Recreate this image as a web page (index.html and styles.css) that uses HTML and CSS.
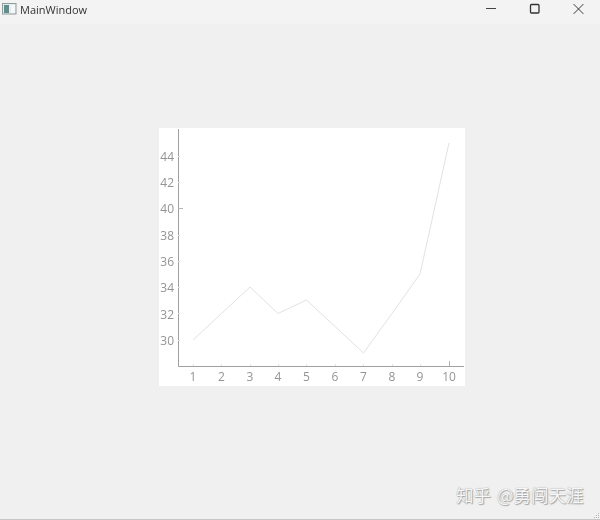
FILE: index.html
```html
<!DOCTYPE html>
<html lang="zh">
<head>
<meta charset="utf-8">
<title>MainWindow</title>
<link rel="stylesheet" href="styles.css">
</head>
<body>
<div class="window">
  <header class="titlebar">
    <div class="title-left">
      <svg class="app-icon" width="15" height="14" viewBox="0 0 15 14">
        <rect x="0.5" y="1.5" width="13.5" height="10.5" fill="#e4eeec" stroke="#8f9c9d"/>
        <rect x="2" y="3" width="5" height="8" fill="#5f8f8d"/>
        <rect x="9" y="3" width="4" height="8" fill="#f4f8f8"/>
      </svg>
      <span class="title-text">MainWindow</span>
    </div>
    <div class="controls">
      <svg class="control" width="44" height="18" viewBox="0 0 44 18"><path d="M17 8.5H27" stroke="#444" fill="none"/></svg>
      <svg class="control" width="44" height="18" viewBox="0 0 44 18"><rect x="17.5" y="4.5" width="8.5" height="8.5" rx="1" stroke="#333" stroke-width="1.3" fill="none"/></svg>
      <svg class="control" width="43" height="18" viewBox="0 0 44 18"><path d="M17 4L27 14M27 4L17 14" stroke="#333" fill="none"/></svg>
    </div>
  </header>
  <main class="content">
    <svg class="chart" width="306" height="258" viewBox="159 128 306 258">
      <rect x="159" y="128" width="306" height="258" fill="#fff"/>
      <path class="axis" d="M178.5 129V366.5H464"/>
      <path class="major" d="M178 208.5H183M449.5 366V361"/>
      <g class="minor">
        <path d="M178 340.5H180M178 313.5H180M178 287.5H180M178 261.5H180M178 235.5H180M178 182.5H180M178 156.5H180"/>
        <path d="M193.5 366V364M221.5 366V364M250.5 366V364M278.5 366V364M306.5 366V364M335.5 366V364M363.5 366V364M392.5 366V364M420.5 366V364"/>
      </g>
      <polyline class="series" points="193,340 221.5,313.5 250,287 278,313.5 306.5,300 335,326.5 363.5,353 392,313.5 420,274 449,143"/>
      <g class="ylabels">
        <text x="174" y="345">30</text>
        <text x="174" y="319">32</text>
        <text x="174" y="292">34</text>
        <text x="174" y="266">36</text>
        <text x="174" y="240">38</text>
        <text x="174" y="213">40</text>
        <text x="174" y="187">42</text>
        <text x="174" y="161">44</text>
      </g>
      <g class="xlabels">
        <text x="193" y="381">1</text>
        <text x="221.5" y="381">2</text>
        <text x="250" y="381">3</text>
        <text x="278" y="381">4</text>
        <text x="306.5" y="381">5</text>
        <text x="335" y="381">6</text>
        <text x="363.5" y="381">7</text>
        <text x="392" y="381">8</text>
        <text x="420" y="381">9</text>
        <text x="449" y="381">10</text>
      </g>
    </svg>
  </main>
  <div class="watermark">知乎 @勇闯天涯</div>
  <svg class="grip" width="8" height="8" viewBox="0 0 8 8"><path d="M6 1h1v1H6zM4 3h1v1H4zM6 3h1v1H6zM2 5h1v1H2zM4 5h1v1H4zM6 5h1v1H6z" fill="#b5b5b5"/></svg>
</div>
</body>
</html>
```
FILE: styles.css
```css
html, body {
  margin: 0;
  padding: 0;
}

.window {
  position: relative;
  display: flex;
  flex-direction: column;
  width: 600px;
  height: 520px;
  overflow: hidden;
  background: #f0f0f0;
  font-family: "Open Sans", "Noto Sans", sans-serif;
}

.titlebar {
  display: flex;
  flex: none;
  justify-content: space-between;
  height: 24px;
  box-sizing: border-box;
  background: #f3f3f3;
}

.title-left {
  display: flex;
  align-items: center;
  gap: 3px;
  height: 18px;
  padding-left: 2px;
}

.app-icon {
  display: block;
}

.title-text {
  padding-top: 2px;
  font-size: 11px;
  line-height: 16px;
  color: #333;
  filter: grayscale(1);
}

.controls {
  display: flex;
}

.control {
  display: block;
}

.content {
  flex: 1;
  padding: 104px 0 0 159px;
  border-bottom: 1px solid #c6c6c6;
}

.chart {
  display: block;
}

.axis {
  stroke: #a0a0a0;
  fill: none;
}

.major {
  stroke: #b4b4b4;
  fill: none;
}

.minor path {
  stroke: #e2e2e2;
  fill: none;
}

.series {
  stroke: #e2e2e2;
  fill: none;
}

.ylabels,
.xlabels {
  filter: grayscale(1);
}

.ylabels text,
.xlabels text {
  font-family: "Open Sans", "Noto Sans", sans-serif;
  font-size: 12px;
  fill: #949494;
}

.ylabels text {
  text-anchor: end;
}

.xlabels text {
  text-anchor: middle;
}

.watermark {
  position: absolute;
  left: 456px;
  top: 484px;
  font-family: "Noto Sans CJK SC", sans-serif;
  font-size: 17.5px;
  line-height: 22px;
  word-spacing: 2px;
  white-space: nowrap;
  color: #f7f7f7;
  text-shadow: 0 0 1px #8c8c8c, 1px 1px 1px #a8a8a8;
}

.grip {
  position: absolute;
  right: 0;
  bottom: 0;
}
```
